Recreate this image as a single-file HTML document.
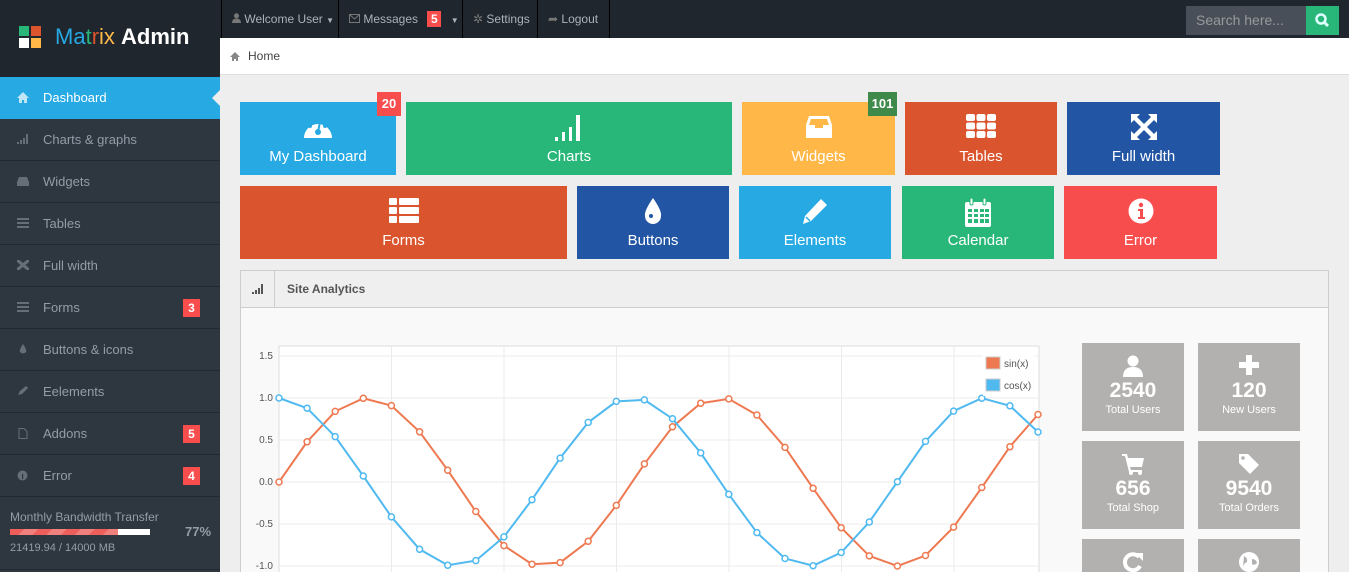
<!DOCTYPE html>
<html style="width:1349px;height:572px;overflow:hidden"><head><meta charset="utf-8">
<style>
*{box-sizing:border-box;margin:0;padding:0}
body{width:1349px;height:572px;overflow:hidden;background:#eeeeee;font-family:"Liberation Sans",sans-serif;position:relative}
.abs{position:absolute}
#top{left:0;top:0;width:1349px;height:38px;background:#1f262d}
.tn{position:absolute;top:0;height:38px;line-height:38px;color:#aab2bb;font-size:12px;border-left:1px solid #000;padding-left:10px}
#logo{left:0;top:0;width:220px;height:77px;background:#1f262d}
#side{left:0;top:77px;width:220px;height:495px;background:#2e363f}
.it{position:absolute;left:0;width:220px;height:42px;border-bottom:1px solid #222a31;color:#939da8;font-size:13px;line-height:42px;padding-left:43px}
.it svg{position:absolute;left:17px;top:15px}
.bd{position:absolute;left:183px;top:12px;width:17px;height:18px;background:#f74d4d;color:#fff;font-weight:bold;font-size:12px;line-height:18px;text-align:center}
#crumb{left:220px;top:38px;width:1129px;height:37px;background:#fff;border-bottom:1px solid #ddd}
.tile{position:absolute;height:73px;color:#fff;font-size:15px;text-align:center}
.tile span{position:absolute;left:0;right:0;top:46px}
.tile svg{position:absolute;left:50%;top:12px;transform:translateX(-50%)}
.badge{position:absolute;color:#fff;font-weight:bold;font-size:13px;text-align:center;height:24px;line-height:24px}
.st{position:absolute;width:102px;height:88px;background:#b3b1af;color:#fff;text-align:center}
.st b{position:absolute;left:0;right:0;top:36px;font-size:21px}
.st i{position:absolute;left:0;right:0;top:61px;font-size:11px;font-style:normal}
.st svg{position:absolute;left:50%;top:12px;transform:translateX(-50%)}
</style></head><body>
<div id="top" class="abs"></div>
<div id="logo" class="abs">
 <div class="abs" style="left:19px;top:26px;width:10px;height:10px;background:#28b779"></div>
 <div class="abs" style="left:31px;top:26px;width:10px;height:10px;background:#da542e"></div>
 <div class="abs" style="left:19px;top:38px;width:10px;height:10px;background:#fff"></div>
 <div class="abs" style="left:31px;top:38px;width:10px;height:10px;background:#ffb848"></div>
 <div class="abs" style="left:55px;top:24px;font-size:22px;color:#27a9e3;white-space:nowrap">Ma<span style="color:#28b779">t</span><span style="color:#da542e">r</span><span style="color:#ffb848">ix</span> <b style="color:#fff">Admin</b></div>
</div>
<div class="tn" style="left:221px;width:117px"><svg width="9" height="10" viewBox="0 0 9 10"><circle cx="4.5" cy="2.8" r="2.5" fill="#777"/><path d="M0 10 Q0 5.5 4.5 5.5 Q9 5.5 9 10Z" fill="#777"/></svg> Welcome User <span style="font-size:8px">▼</span></div>
<div class="tn" style="left:338px;width:124px"><svg width="11" height="9" viewBox="0 0 11 9"><rect x=".5" y=".5" width="10" height="8" fill="none" stroke="#777"/><path d="M.5 .5L5.5 5L10.5 .5" fill="none" stroke="#777"/></svg> Messages <span style="display:inline-block;background:#f74d4d;color:#fff;font-weight:bold;width:14px;height:16px;line-height:16px;text-align:center;margin-left:6px">5</span> <span style="font-size:8px;margin-left:6px">▼</span></div>
<div class="tn" style="left:462px;width:75px"><span style="color:#777">✲</span> Settings</div>
<div class="tn" style="left:537px;width:72px"><span style="color:#777">➦</span> Logout</div>
<div class="tn" style="left:609px;width:1px;padding:0"></div>
<div class="abs" style="left:1186px;top:6px;width:120px;height:29px;background:#484f59;color:#999;font-size:14px;line-height:29px;padding-left:10px">Search here...</div>
<div class="abs" style="left:1306px;top:6px;width:33px;height:29px;background:#28b779"><svg width="33" height="29"><circle cx="15" cy="13" r="4.5" fill="none" stroke="#dff" stroke-width="2.5"/><path d="M18 16l4 4" stroke="#dff" stroke-width="3"/></svg></div>

<div id="side" class="abs">
 <div class="it" style="top:0;background:#27a9e3;color:#fff;border:none"><svg width="12" height="11"><path d="M6 0L0 6h2v5h3V8h2v3h3V6h2z" fill="#bfe6f7"/></svg>Dashboard</div>
 <div class="abs" style="left:212px;top:13px;width:0;height:0;border-top:8px solid transparent;border-bottom:8px solid transparent;border-right:8px solid #eee"></div>
 <div class="it" style="top:42px"><svg width="12" height="10"><rect x="0" y="8" width="2" height="2" fill="#666e77"/><rect x="3" y="6" width="2" height="4" fill="#666e77"/><rect x="6" y="4" width="2" height="6" fill="#666e77"/><rect x="9" y="0" width="2" height="10" fill="#666e77"/></svg>Charts &amp; graphs</div>
 <div class="it" style="top:84px"><svg width="12" height="10"><path d="M2 1h8l2 5v4H0V6z" fill="#666e77"/></svg>Widgets</div>
 <div class="it" style="top:126px"><svg width="12" height="10"><path d="M0 0h12v2H0zM0 4h12v2H0zM0 8h12v2H0z" fill="#666e77"/></svg>Tables</div>
 <div class="it" style="top:168px"><svg width="12" height="10"><path d="M0 0l12 10M12 0L0 10" stroke="#666e77" stroke-width="3"/></svg>Full width</div>
 <div class="it" style="top:210px"><svg width="12" height="10"><path d="M0 0h12v2H0zM0 4h12v2H0zM0 8h12v2H0z" fill="#666e77"/></svg>Forms<div class="bd">3</div></div>
 <div class="it" style="top:252px"><svg width="12" height="10"><path d="M6 0Q2 6 3 8Q6 11 9 8Q10 6 6 0" fill="#666e77"/></svg>Buttons &amp; icons</div>
 <div class="it" style="top:294px"><svg width="12" height="10"><path d="M1 9l2-4 6-5 2 2-6 6z" fill="#666e77"/></svg>Eelements</div>
 <div class="it" style="top:336px"><svg width="12" height="11"><path d="M2 .5h5l3 3v7H2z" fill="none" stroke="#666e77"/></svg>Addons<div class="bd">5</div></div>
 <div class="it" style="top:378px"><svg width="12" height="11"><circle cx="5.5" cy="5.5" r="5" fill="#666e77"/><rect x="5" y="4" width="1.2" height="5" fill="#2e363f"/></svg>Error<div class="bd">4</div></div>
 <div class="abs" style="left:10px;top:433px;color:#939da8;font-size:12px">Monthly Bandwidth Transfer</div>
 <div class="abs" style="left:10px;top:452px;width:140px;height:6px;background:#fff"><div style="width:108px;height:6px;background:repeating-linear-gradient(135deg,#ee5f5b 0 10px,#f0807c 10px 20px)"></div></div>
 <div class="abs" style="left:185px;top:447px;color:#939da8;font-size:13px;font-weight:bold">77%</div>
 <div class="abs" style="left:10px;top:465px;color:#939da8;font-size:11px">21419.94 / 14000 MB</div>
 <div class="abs" style="left:0;top:419px;width:220px;height:1px;background:#222a31"></div>
 <div class="abs" style="left:0;top:492px;width:220px;height:1px;background:#222a31"></div>
</div>

<div id="crumb" class="abs"><svg class="abs" style="left:10px;top:14px" width="10" height="9"><path d="M5 0L0 5h2v4h2V7h2v2h2V5h2z" fill="#888"/></svg><span class="abs" style="left:28px;top:11px;font-size:12px;color:#444">Home</span></div>

<div class="tile" style="left:240px;top:102px;width:156px;background:#27a9e3"><svg width="30" height="25"><path d="M1 24A14 14 0 1 1 29 24Z" fill="#fff"/><circle cx="15" cy="18" r="3" fill="#27a9e3"/><path d="M15 18L17 8" stroke="#27a9e3" stroke-width="2"/><circle cx="7" cy="12" r="2" fill="#27a9e3"/><circle cx="10" cy="7" r="2" fill="#27a9e3"/><circle cx="22" cy="12" r="2" fill="#27a9e3"/></svg><span>My Dashboard</span></div>
<div class="badge" style="left:377px;top:92px;width:24px;background:#f74d4d">20</div>
<div class="tile" style="left:406px;top:102px;width:326px;background:#28b779"><svg width="30" height="27"><rect x="1" y="23" width="3" height="4" fill="#fff"/><rect x="8" y="18" width="3" height="9" fill="#fff"/><rect x="15" y="13" width="3" height="14" fill="#fff"/><rect x="22" y="1" width="4" height="26" fill="#fff"/></svg><span>Charts</span></div>
<div class="tile" style="left:742px;top:102px;width:153px;background:#ffb848"><svg width="26" height="24"><path d="M3 2h20l3 9v13H0V11z" fill="#fff"/><path d="M5 5h16l2 6h-6v3H9v-3H3z" fill="#ffb848"/></svg><span>Widgets</span></div>
<div class="badge" style="left:868px;top:92px;width:29px;background:#3f8a4b">101</div>
<div class="tile" style="left:905px;top:102px;width:152px;background:#da542e"><svg width="30" height="24"><g fill="#fff"><rect x="0" y="0" width="9" height="7" rx="2"/><rect x="10.5" y="0" width="9" height="7" rx="2"/><rect x="21" y="0" width="9" height="7" rx="2"/><rect x="0" y="8.5" width="9" height="7" rx="2"/><rect x="10.5" y="8.5" width="9" height="7" rx="2"/><rect x="21" y="8.5" width="9" height="7" rx="2"/><rect x="0" y="17" width="9" height="7" rx="2"/><rect x="10.5" y="17" width="9" height="7" rx="2"/><rect x="21" y="17" width="9" height="7" rx="2"/></g></svg><span>Tables</span></div>
<div class="tile" style="left:1067px;top:102px;width:153px;background:#2255a4"><svg width="26" height="26"><g fill="#fff"><path d="M0 0h9L6 3l7 7 7-7-3-3h9v9l-3-3-7 7 7 7 3-3v9h-9l3-3-7-7-7 7 3 3H0v-9l3 3 7-7-7-7-3 3z"/></g></svg><span>Full width</span></div>
<div class="tile" style="left:240px;top:186px;width:327px;background:#da542e"><svg width="30" height="25"><g fill="#fff"><rect x="0" y="0" width="8" height="7" rx="1"/><rect x="10" y="0" width="20" height="7" rx="1"/><rect x="0" y="9" width="8" height="7" rx="1"/><rect x="10" y="9" width="20" height="7" rx="1"/><rect x="0" y="18" width="8" height="7" rx="1"/><rect x="10" y="18" width="20" height="7" rx="1"/></g></svg><span>Forms</span></div>
<div class="tile" style="left:577px;top:186px;width:152px;background:#2255a4"><svg width="18" height="26"><path d="M9 0Q0 13 1 18A8 8 0 0 0 17 18Q18 13 9 0Z" fill="#fff"/><circle cx="7" cy="18" r="2" fill="#2255a4"/></svg><span>Buttons</span></div>
<div class="tile" style="left:739px;top:186px;width:152px;background:#27a9e3"><svg width="26" height="27"><path d="M19 1l6 6L9 23l-8 3 2-8z" fill="#fff"/><path d="M4 19l4 4" stroke="#27a9e3" stroke-width="1.5"/></svg><span>Elements</span></div>
<div class="tile" style="left:902px;top:186px;width:152px;background:#28b779"><svg width="28" height="30"><rect x="1" y="4" width="26" height="25" rx="2" fill="#fff"/><g fill="#28b779"><rect x="4" y="11" width="4" height="3"/><rect x="10" y="11" width="4" height="3"/><rect x="16" y="11" width="4" height="3"/><rect x="21" y="11" width="4" height="3"/><rect x="4" y="16" width="4" height="3"/><rect x="10" y="16" width="4" height="3"/><rect x="16" y="16" width="4" height="3"/><rect x="21" y="16" width="4" height="3"/><rect x="4" y="21" width="4" height="4"/><rect x="10" y="21" width="4" height="4"/><rect x="16" y="21" width="4" height="4"/><rect x="21" y="21" width="4" height="4"/></g><rect x="6" y="0" width="3" height="7" rx="1.5" fill="#fff" stroke="#28b779"/><rect x="19" y="0" width="3" height="7" rx="1.5" fill="#fff" stroke="#28b779"/></svg><span>Calendar</span></div>
<div class="tile" style="left:1064px;top:186px;width:153px;background:#f74d4d"><svg width="26" height="26"><circle cx="13" cy="13" r="12.5" fill="#fff"/><circle cx="13" cy="7" r="2.2" fill="#f74d4d"/><path d="M10 11h5v8h2v2h-7v-2h2v-6h-2z" fill="#f74d4d"/></svg><span>Error</span></div>

<div class="abs" style="left:240px;top:270px;width:1089px;height:302px;border:1px solid #cdcdcd;border-bottom:none;background:#f9f9f9;overflow:hidden"></div>
<div class="abs" style="left:241px;top:271px;width:1087px;height:37px;background:#efefef;border-bottom:1px solid #cdcdcd"></div>
<div class="abs" style="left:274px;top:271px;width:1px;height:37px;background:#cdcdcd"></div>
<svg class="abs" style="left:252px;top:284px" width="12" height="10"><g fill="#555"><rect x="0" y="8" width="2" height="2"/><rect x="3" y="6" width="2" height="4"/><rect x="6" y="4" width="2" height="6"/><rect x="9" y="0" width="2" height="10"/></g></svg>
<div class="abs" style="left:287px;top:282px;font-size:12px;font-weight:bold;color:#555">Site Analytics</div>

<svg class="abs" style="left:240px;top:330px" width="820" height="242">
 <g transform="translate(-240,-330)" font-family="Liberation Sans" font-size="10" fill="#545454">
  <rect x="279" y="346" width="760" height="240" fill="#fff" stroke="#ddd"/>
  <g stroke="#ebebeb"><path d="M279 356H1038M279 398H1038M279 440H1038M279 482H1038M279 524H1038M279 566H1038"/>
  <path d="M391.5 346V572M504 346V572M616.5 346V572M729 346V572M841.5 346V572M954 346V572"/></g>
  <g text-anchor="end"><text x="273" y="359">1.5</text><text x="273" y="401">1.0</text><text x="273" y="443">0.5</text><text x="273" y="485">0.0</text><text x="273" y="527">-0.5</text><text x="273" y="569">-1.0</text></g>
  <polyline fill="none" stroke="#ee7951" stroke-width="2" points="279,482 307.1,441.8 335.2,411.4 363.3,398.3 391.4,405.6 419.6,431.8 447.7,470.2 475.8,511.5 503.9,545.6 532,564.2 560.1,562.6 588.2,541.3 616.3,505.4 644.4,463.9 672.5,426.8 700.7,403.2 728.8,398.9 756.9,415 785,447.4 813.1,488.3 841.2,527.7 869.3,555.9 897.4,566 925.5,555.5 953.6,527.1 981.8,487.5 1009.9,446.7 1038,414.5"/>
  <polyline fill="none" stroke="#4fb9f0" stroke-width="2" points="279,398 307.1,408.2 335.2,436.6 363.3,476 391.4,516.9 419.6,549.3 447.7,565.2 475.8,560.6 503.9,536.9 532,499.7 560.1,458.1 588.2,422.4 616.3,401.4 644.4,399.9 672.5,418.7 700.7,452.9 728.8,494.3 756.9,532.6 785,558.5 813.1,565.7 841.2,552.5 869.3,522 897.4,481.7 925.5,441.4 953.6,411.1 981.8,398.2 1009.9,405.8 1038,432"/>
  <g fill="#fff" stroke="#ee7951" stroke-width="1.5">
   <circle cx="279" cy="482" r="3"/><circle cx="307.1" cy="441.8" r="3"/><circle cx="335.2" cy="411.4" r="3"/><circle cx="363.3" cy="398.3" r="3"/><circle cx="391.4" cy="405.6" r="3"/><circle cx="419.6" cy="431.8" r="3"/><circle cx="447.7" cy="470.2" r="3"/><circle cx="475.8" cy="511.5" r="3"/><circle cx="503.9" cy="545.6" r="3"/><circle cx="532" cy="564.2" r="3"/><circle cx="560.1" cy="562.6" r="3"/><circle cx="588.2" cy="541.3" r="3"/><circle cx="616.3" cy="505.4" r="3"/><circle cx="644.4" cy="463.9" r="3"/><circle cx="672.5" cy="426.8" r="3"/><circle cx="700.7" cy="403.2" r="3"/><circle cx="728.8" cy="398.9" r="3"/><circle cx="756.9" cy="415" r="3"/><circle cx="785" cy="447.4" r="3"/><circle cx="813.1" cy="488.3" r="3"/><circle cx="841.2" cy="527.7" r="3"/><circle cx="869.3" cy="555.9" r="3"/><circle cx="897.4" cy="566" r="3"/><circle cx="925.5" cy="555.5" r="3"/><circle cx="953.6" cy="527.1" r="3"/><circle cx="981.8" cy="487.5" r="3"/><circle cx="1009.9" cy="446.7" r="3"/><circle cx="1038" cy="414.5" r="3"/>
  </g>
  <g fill="#fff" stroke="#4fb9f0" stroke-width="1.5">
   <circle cx="279" cy="398" r="3"/><circle cx="307.1" cy="408.2" r="3"/><circle cx="335.2" cy="436.6" r="3"/><circle cx="363.3" cy="476" r="3"/><circle cx="391.4" cy="516.9" r="3"/><circle cx="419.6" cy="549.3" r="3"/><circle cx="447.7" cy="565.2" r="3"/><circle cx="475.8" cy="560.6" r="3"/><circle cx="503.9" cy="536.9" r="3"/><circle cx="532" cy="499.7" r="3"/><circle cx="560.1" cy="458.1" r="3"/><circle cx="588.2" cy="422.4" r="3"/><circle cx="616.3" cy="401.4" r="3"/><circle cx="644.4" cy="399.9" r="3"/><circle cx="672.5" cy="418.7" r="3"/><circle cx="700.7" cy="452.9" r="3"/><circle cx="728.8" cy="494.3" r="3"/><circle cx="756.9" cy="532.6" r="3"/><circle cx="785" cy="558.5" r="3"/><circle cx="813.1" cy="565.7" r="3"/><circle cx="841.2" cy="552.5" r="3"/><circle cx="869.3" cy="522" r="3"/><circle cx="897.4" cy="481.7" r="3"/><circle cx="925.5" cy="441.4" r="3"/><circle cx="953.6" cy="411.1" r="3"/><circle cx="981.8" cy="398.2" r="3"/><circle cx="1009.9" cy="405.8" r="3"/><circle cx="1038" cy="432" r="3"/>
  </g>
  <rect x="983" y="352" width="52" height="44" fill="#fff" opacity=".85"/>
  <rect x="986" y="357" width="14" height="12" fill="#ee7951" stroke="#ccc"/>
  <rect x="986" y="379" width="14" height="12" fill="#4fb9f0" stroke="#ccc"/>
  <text x="1004" y="367" fill="#545454">sin(x)</text><text x="1004" y="389" fill="#545454">cos(x)</text>
 </g>
</svg>

<div class="st" style="left:1082px;top:343px"><svg width="20" height="22"><circle cx="10" cy="6" r="5.5" fill="#fff"/><path d="M0 22Q0 12 10 12Q20 12 20 22Z" fill="#fff"/></svg><b>2540</b><i>Total Users</i></div>
<div class="st" style="left:1198px;top:343px"><svg width="20" height="20"><path d="M7 0h6v7h7v6h-7v7H7v-7H0V7h7z" fill="#fff"/></svg><b>120</b><i>New Users</i></div>
<div class="st" style="left:1082px;top:441px"><svg width="22" height="22"><path d="M0 1h5l1 4h16l-2 9H8l1 3h11v2H7L3 3H0z" fill="#fff"/><circle cx="9" cy="20" r="2" fill="#fff"/><circle cx="18" cy="20" r="2" fill="#fff"/></svg><b>656</b><i>Total Shop</i></div>
<div class="st" style="left:1198px;top:441px"><svg width="22" height="22"><path d="M1 1h9l11 11-9 9L1 10z" fill="#fff"/><circle cx="5" cy="5" r="1.8" fill="#b3b1af"/></svg><b>9540</b><i>Total Orders</i></div>
<div class="st" style="left:1082px;top:539px;height:33px;overflow:hidden"><svg width="22" height="22"><path d="M17 6A8 8 0 1 0 18 15" fill="none" stroke="#fff" stroke-width="4"/><path d="M13 2h8v8z" fill="#fff"/></svg></div>
<div class="st" style="left:1198px;top:539px;height:33px;overflow:hidden"><svg width="22" height="22"><circle cx="11" cy="11" r="10" fill="#fff"/><path d="M6 5q4 2 3 6q-3 1-4 5M14 8q4 0 5 4q-3 3-5 1" fill="#b3b1af"/></svg></div>
</body></html>
